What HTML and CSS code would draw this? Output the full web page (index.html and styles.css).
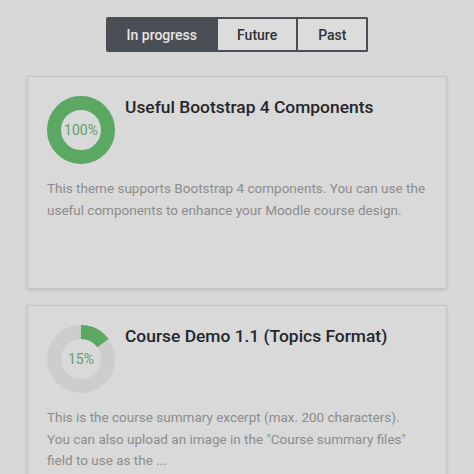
FILE: index.html
```html
<!DOCTYPE html>
<html lang="en">
<head>
  <meta charset="UTF-8">
  <title>My courses</title>
  <link rel="stylesheet" href="styles.css">
</head>
<body>

<!-- Course filter tabs -->
<div class="tabs">
  <button class="tab active">In progress</button>
  <button class="tab">Future</button>
  <button class="tab">Past</button>
</div>

<div class="course-list">
  <div class="course-card">
    <div class="course-head">
      <div class="progress-ring">
        <svg viewBox="0 0 68 68">
          <circle class="ring-track" cx="34" cy="34" r="27"/>
          <circle class="ring-fill" cx="34" cy="34" r="27" stroke-dasharray="169.65 169.65"/>
        </svg>
        <span class="ring-label">100%</span>
      </div>
      <h2 class="course-title">Useful Bootstrap 4 Components</h2>
    </div>
    <p class="course-summary">This theme supports Bootstrap 4 components. You can use the useful components to enhance your Moodle course design.</p>
  </div>

  <div class="course-card">
    <div class="course-head">
      <div class="progress-ring">
        <svg viewBox="0 0 68 68">
          <circle class="ring-track" cx="34" cy="34" r="27"/>
          <circle class="ring-fill" cx="34" cy="34" r="27" stroke-dasharray="25.45 169.65"/>
        </svg>
        <span class="ring-label">15%</span>
      </div>
      <h2 class="course-title">Course Demo 1.1 (Topics Format)</h2>
    </div>
    <p class="course-summary">This is the course summary excerpt (max. 200 characters). You&nbsp;can also upload an image in the "Course summary files" field to use as the ...</p>
  </div>
</div>

</body>
</html>
```

FILE: styles.css
```css
body {
  margin: 0;
  padding: 0;
  background: #d8d8d8;
  font-family: Roboto, "Liberation Sans", sans-serif;
  overflow: hidden;
}

/* Tabs */
.tabs {
  display: flex;
  justify-content: center;
  padding-top: 17px;
}

.tab {
  height: 35px;
  margin: 0;
  padding: 0 19px;
  border: 2px solid #4a4f55;
  border-left-width: 0;
  background: #dcdcdc;
  color: #2f3338;
  font-family: Roboto, "Liberation Sans", sans-serif;
  font-size: 14px;
  font-weight: 500;
}

.tab:first-child {
  border-left-width: 2px;
  border-radius: 2px 0 0 2px;
}

.tab:last-child {
  padding: 0 20px;
  border-radius: 0 2px 2px 0;
}

.tab.active {
  background: #4a4f55;
  color: #e6e6e6;
}

/* Course cards */
.course-list {
  display: flex;
  flex-direction: column;
  gap: 16px;
  padding: 24px 27px 0;
}

.course-card {
  box-sizing: border-box;
  min-height: 213px;
  padding: 19px 16px 19px 19px;
  background: #d9d9d9;
  border: 1px solid #c5c5c5;
  box-shadow: 0 1px 3px rgba(0, 0, 0, 0.12);
}

.course-head {
  display: flex;
  gap: 10px;
}

.progress-ring {
  position: relative;
  width: 68px;
  height: 68px;
  flex: none;
}

.progress-ring svg {
  display: block;
  width: 68px;
  height: 68px;
  transform: rotate(-90deg);
}

.ring-track {
  fill: none;
  stroke: #cdcdcd;
  stroke-width: 14;
}

.ring-fill {
  fill: none;
  stroke: #5aa862;
  stroke-width: 14;
}

.ring-label {
  position: absolute;
  inset: 0;
  display: flex;
  align-items: center;
  justify-content: center;
  font-size: 14px;
  color: #5f9f67;
}

.course-title {
  margin: 0;
  font-size: 17.4px;
  line-height: 22px;
  font-weight: 500;
  color: #23262a;
}

.course-summary {
  margin: 14px 0 0;
  font-size: 13.5px;
  line-height: 21.5px;
  color: #8c8c8c;
}
```
